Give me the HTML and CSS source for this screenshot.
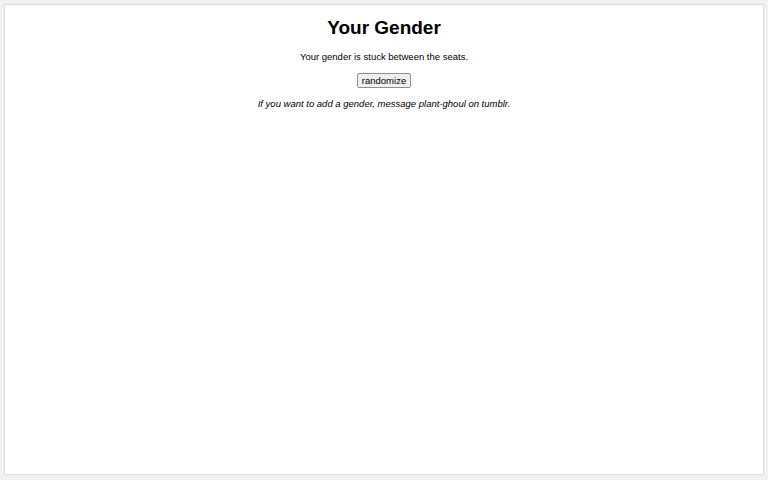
FILE: index.html
```html
<!DOCTYPE html>
<html lang="en">
<head>
    <meta charset="UTF-8">
    <title>Your Gender</title>
    <link rel="stylesheet" href="styles.css">
</head>
<body>
    <main class="page">
        <h1 class="title">Your Gender</h1>
        <p class="result">Your gender is stuck between the seats.</p>
        <button class="randomize" type="button">randomize</button>
        <p class="note">If you want to add a gender, message plant-ghoul on tumblr.</p>
    </main>
</body>
</html>
```

FILE: styles.css
```css
* {
    margin: 0;
    padding: 0;
    box-sizing: border-box;
}

html, body {
    height: 100%;
}

body {
    background-color: #f1f1f1;
    padding: 4px 4px 5px 4px;
    font-family: "Liberation Sans", Arial, sans-serif;
    color: #000;
}

.page {
    height: 100%;
    background-color: #fff;
    border: 1px solid #dcdcdc;
    display: flex;
    flex-direction: column;
    align-items: center;
    padding-top: 11px;
}

.title {
    font-size: 19px;
    font-weight: bold;
    line-height: 24px;
}

.result {
    font-size: 9.5px;
    line-height: 12px;
    margin-top: 11px;
}

.randomize {
    font-family: "Liberation Sans", Arial, sans-serif;
    font-size: 9.5px;
    line-height: 12px;
    margin-top: 10px;
    padding: 0 4px;
    height: 15px;
    border: 1px solid #8f8f8f;
    border-radius: 2px;
    background-color: #efefef;
    color: #000;
}

.note {
    font-size: 9.5px;
    line-height: 12px;
    font-style: italic;
    margin-top: 10px;
}
```
